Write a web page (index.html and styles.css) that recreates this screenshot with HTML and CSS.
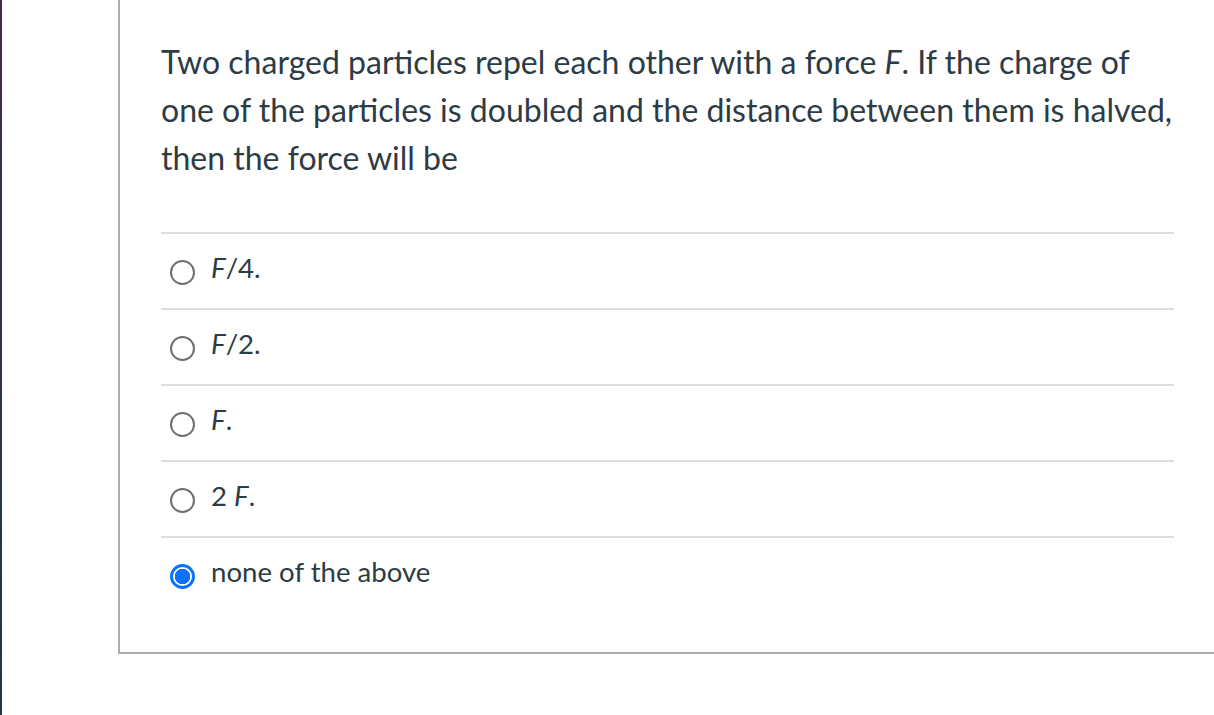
FILE: index.html
```html
<!DOCTYPE html>
<html>
<head>
<meta charset="utf-8">
<link rel="stylesheet" href="styles.css">
</head>
<body>
<div class="page">
  <div class="sidebar-edge"></div>
  <div class="gutter"></div>
  <div class="card">
    <div class="question">Two charged particles repel each other with a force <i>F</i>. If the charge of one of the particles is doubled and the distance between them is halved, then the force will be</div>
    <div class="answers">
      <label class="answer"><span class="radio"></span><span class="answer-text"><i>F</i>/4.</span></label>
      <label class="answer"><span class="radio"></span><span class="answer-text"><i>F</i>/2.</span></label>
      <label class="answer"><span class="radio"></span><span class="answer-text"><i>F</i>.</span></label>
      <label class="answer"><span class="radio"></span><span class="answer-text">2 <i>F</i>.</span></label>
      <label class="answer"><span class="radio checked"></span><span class="answer-text">none of the above</span></label>
    </div>
  </div>
</div>
</body>
</html>
```

FILE: styles.css
```css
html, body {
  margin: 0;
  padding: 0;
  background: #ffffff;
  height: 100%;
  overflow: hidden;
}

.page {
  display: flex;
  align-items: flex-start;
  height: 715px;
}

.sidebar-edge {
  width: 2px;
  height: 715px;
  background: linear-gradient(to bottom, #4a2649 0%, #2e3348 45%, #1d3a45 100%);
  flex: none;
}

.gutter {
  width: 116px;
  flex: none;
}

.card {
  flex: 1;
  border-left: 2px solid #acacac;
  border-bottom: 2px solid #acacac;
  padding: 38px 40px 40px 41px;
  font-family: Lato, "Open Sans", sans-serif;
  color: #2d3b45;
}

.question {
  font-size: 32px;
  line-height: 48px;
  margin-bottom: 50px;
}

.question i {
  font-style: italic;
}

.answers {
  display: flex;
  flex-direction: column;
}

.answer {
  display: flex;
  align-items: center;
  gap: 16px;
  height: 74px;
  border-top: 2px solid #dddddd;
  padding-left: 9px;
  font-size: 27.6px;
}

.radio {
  width: 25px;
  height: 25px;
  box-sizing: border-box;
  border: 2px solid #6f6f6f;
  border-radius: 50%;
  flex: none;
  margin-top: 2px;
}

.radio.checked {
  border: 3px solid #0b72ff;
  background: radial-gradient(circle, #0b72ff 0 7.5px, #ffffff 8px);
}

.answer-text {
  line-height: 30px;
  margin-top: -6px;
}
```
